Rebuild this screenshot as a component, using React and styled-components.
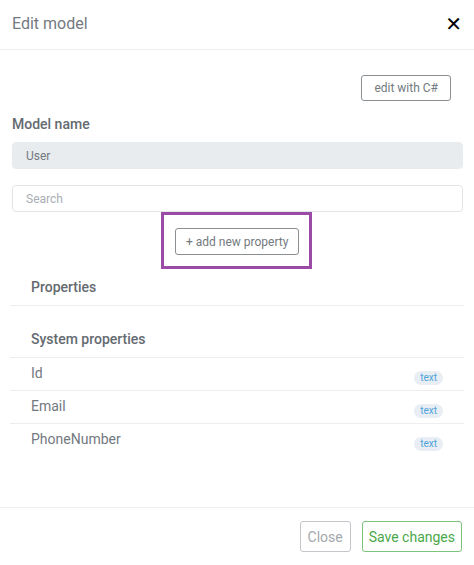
import React from "react";
import styled, { createGlobalStyle } from "styled-components";

const Global = createGlobalStyle`
  html, body { margin: 0; padding: 0; background: #fff; }
  body { font-family: Roboto, "Liberation Sans", Arial, sans-serif; }
  * { box-sizing: border-box; }
`;

const Modal = styled.div`
  width: 474px;
  height: 565px;
  display: flex;
  flex-direction: column;
  background: #fff;
`;

const Header = styled.div`
  height: 50px;
  display: flex;
  align-items: center;
  justify-content: space-between;
  padding: 0 12px 2px 12px;
  border-bottom: 1px solid #eeeeee;
`;

const Title = styled.h5`
  margin: 0;
  font-size: 16px;
  font-weight: 400;
  color: #74797f;
`;

const CloseX = styled.button`
  border: 0;
  background: none;
  padding: 0;
  font-size: 20px;
  font-weight: 700;
  line-height: 1;
  color: #000;
  font-family: "DejaVu Sans", sans-serif;
  cursor: pointer;
`;

const Body = styled.div`
  flex: 1;
  padding: 25px 11px 0 12px;
  display: flex;
  flex-direction: column;
`;

const Toolbar = styled.div`
  display: flex;
  justify-content: flex-end;
  padding-right: 12px;
`;

const OutlineButton = styled.button`
  height: ${(p) => p.$h || 26}px;
  padding: 0 ${(p) => p.$px || 12}px;
  font-family: inherit;
  font-size: ${(p) => p.$fs || 12}px;
  color: ${(p) => p.$color || "#737a80"};
  background: #fff;
  border: 1px solid ${(p) => p.$border || "#8a8f94"};
  border-radius: 3px;
  cursor: pointer;
`;

const Label = styled.div`
  margin-top: 15px;
  font-size: 14px;
  font-weight: 500;
  color: #646a70;
  line-height: 16px;
`;

const Input = styled.div`
  margin-top: ${(p) => p.$mt}px;
  height: 27px;
  display: flex;
  align-items: center;
  padding: 0 13px;
  font-size: 12px;
  border-radius: 4px;
  background: ${(p) => (p.$disabled ? "#e9ecef" : "#fff")};
  border: 1px solid ${(p) => (p.$disabled ? "#e9ecef" : "#e2e5e8")};
  color: ${(p) => (p.$disabled ? "#73797f" : "#a9aeb3")};
`;

const HighlightRow = styled.div`
  display: flex;
  justify-content: center;
  padding-right: 2px;
`;

const Highlight = styled.div`
  width: 151px;
  height: 57px;
  border: 3px solid #9b4aa6;
  padding: 13px 0 0 11px;
`;

const List = styled.div`
  margin: 0 -1px 0 -2px;
  display: flex;
  flex-direction: column;
`;

const SectionHead = styled.div`
  margin-top: ${(p) => p.$mt || 0}px;
  height: 37px;
  display: flex;
  align-items: center;
  padding: 0 0 1px 21px;
  font-size: 14px;
  font-weight: 500;
  color: #646a70;
  border-bottom: 1px solid #eeeeee;
`;

const Row = styled.div`
  height: 33px;
  display: flex;
  align-items: center;
  justify-content: space-between;
  padding: 0 21px 2px 21px;
  font-size: 14px;
  color: #73797f;
  border-bottom: 1px solid ${(p) => (p.$last ? "transparent" : "#eeeeee")};
`;

const Badge = styled.span`
  margin-top: 9px;
  padding: 1px 6px;
  border-radius: 8px;
  background: #e9eef4;
  color: #4ea3d8;
  font-size: 10px;
  line-height: 12px;
`;

const Footer = styled.div`
  height: 58px;
  border-top: 1px solid #eeeeee;
  display: flex;
  justify-content: flex-end;
  align-items: flex-start;
  gap: 11px;
  padding: 13px 12px 0 0;
`;

const rows = ["Id", "Email", "PhoneNumber"];

export default function App() {
  return (
    <>
      <Global />
      <Modal>
        <Header>
          <Title>Edit model</Title>
          <CloseX aria-label="close">✕</CloseX>
        </Header>
        <Body>
          <Toolbar>
            <OutlineButton $px={12}>edit with C#</OutlineButton>
          </Toolbar>
          <Label>Model name</Label>
          <Input $mt={10} $disabled>User</Input>
          <Input $mt={16}>Search</Input>
          <HighlightRow>
            <Highlight>
              <OutlineButton $h={27} $px={10}>+ add new property</OutlineButton>
            </Highlight>
          </HighlightRow>
          <List>
            <SectionHead>Properties</SectionHead>
            <SectionHead $mt={15}>System properties</SectionHead>
            {rows.map((r, i) => (
              <Row key={r} $last={i === rows.length - 1}>
                <span>{r}</span>
                <Badge>text</Badge>
              </Row>
            ))}
          </List>
        </Body>
        <Footer>
          <OutlineButton $h={31} $px={7} $fs={14} $color="#a3a8ad" $border="#c3c7cb">
            Close
          </OutlineButton>
          <OutlineButton $h={31} $px={6} $fs={14} $color="#4aa84a" $border="#7cc47c">
            Save changes
          </OutlineButton>
        </Footer>
      </Modal>
    </>
  );
}
